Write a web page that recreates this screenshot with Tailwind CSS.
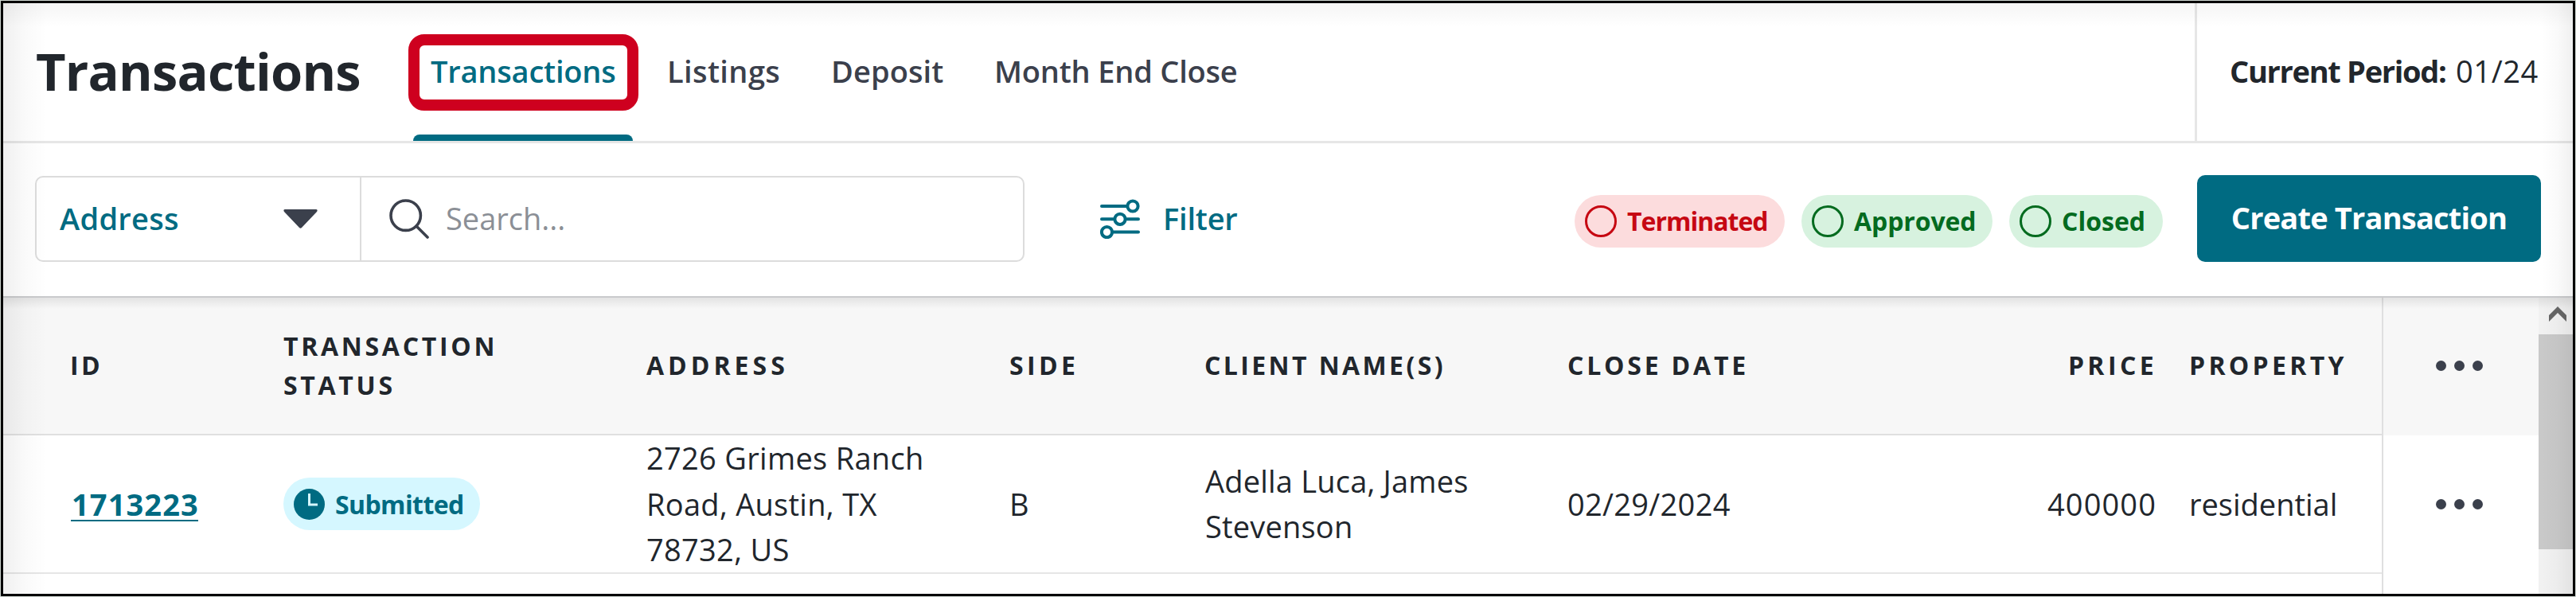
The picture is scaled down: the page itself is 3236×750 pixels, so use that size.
<!doctype html>
<html lang="en">
  <head>
    <meta charset="UTF-8" />
    <meta name="viewport" content="width=device-width, initial-scale=1.0" />
    <title>Transactions</title>
    <!-- Tailwind -->
    <script src="https://cdn.jsdelivr.net/npm/@tailwindcss/browser@4"></script>
  </head>

  <body class="bg-[#cfd6d1]">
    <div
      class="relative m-px flex h-[748px] w-[3234px] flex-col overflow-hidden border-3 border-black bg-white font-['Open_Sans',sans-serif] text-[38px] leading-[57.5px] whitespace-nowrap text-[#21262c]"
    >
      <!-- Page header -->
      <header class="flex h-[176px] shrink-0 border-b-3 border-[#e6e6e6]">
        <h1
          class="flex w-[515px] items-center pb-0.5 pl-[41px] text-[65px] font-bold tracking-[-0.8px]"
        >
          Transactions
        </h1>
        <nav class="flex gap-5 font-semibold text-[#3b404c]">
          <a
            class="relative flex w-[276px] items-center pb-0.5 pl-[22px] tracking-[-0.2px] text-[#006b82]"
          >
            Transactions
            <span
              class="absolute top-[39px] -left-1.5 h-[96px] w-[289px] rounded-[20px] border-14 border-[#ce001f]"
            ></span>
            <span
              class="absolute bottom-0 left-0 h-2 w-full rounded-t-lg bg-[#006b82]"
            ></span>
          </a>
          <a class="flex w-[186px] items-center pb-0.5 pl-[23px] tracking-[0.4px]">Listings</a>
          <a class="flex w-[185px] items-center pb-0.5 pl-[23px] tracking-[0.1px]">Deposit</a>
          <a class="flex items-center pb-0.5 pl-[23px] tracking-[-0.2px]">Month End Close</a>
        </nav>
        <div
          class="ml-auto flex w-[475px] items-center border-l-3 border-[#e6e6e6] pb-0.5 pl-[41px]"
        >
          <span class="w-[284px] font-bold tracking-[-1.3px]">Current Period:</span>
          <span class="tracking-[0.6px]">01/24</span>
        </div>
      </header>

      <!-- Search and filters -->
      <div class="flex h-[192px] shrink-0 items-center pr-10 pb-[3px] pl-10">
        <div class="flex h-[108px] w-[1243px] rounded-[10px] border-2 border-[#dcdcdc]">
          <button
            class="flex w-[408px] items-center justify-between border-r-2 border-[#dcdcdc] pr-[53px] pl-[29px] font-semibold tracking-[0.3px] text-[#006b82]"
          >
            Address
            <svg class="h-[24px] w-[43px]" viewBox="0 0 43 24" fill="#3b404c">
              <path d="M2 0h39c2 0 2 2 1 3L23 23c-1 1-2 1-3 0L1 3C0 2 0 0 2 0z" />
            </svg>
          </button>
          <div class="flex items-center gap-[21px] pl-[35px] text-[#8b8f96]">
            <svg
              class="h-[50px] w-[50px]"
              viewBox="0 0 50 50"
              fill="none"
              stroke="#3b404c"
              stroke-width="3.6"
              stroke-linecap="round"
            >
              <circle cx="20.7" cy="20.7" r="18.7" />
              <path d="M34 34L48 48" />
            </svg>
            Search...
          </div>
        </div>

        <button
          class="ml-[95px] flex items-center gap-[29px] font-semibold tracking-[-0.2px] text-[#006b82]"
        >
          <svg
            class="h-[50px] w-[50px]"
            viewBox="0 0 50 50"
            fill="none"
            stroke="currentColor"
            stroke-width="4"
            stroke-linecap="round"
          >
            <path d="M2 9h32M2 25.3h16M32 25.3h16M16 41.6h32" />
            <circle cx="41" cy="9" r="6.6" />
            <circle cx="25" cy="25.3" r="6.6" />
            <circle cx="8.5" cy="41.6" r="6.6" />
          </svg>
          Filter
        </button>

        <div class="mt-[6px] mr-[43px] ml-auto flex gap-[21px] text-[32px] font-bold">
          <span
            class="flex h-[66px] w-[264px] items-center gap-[13px] rounded-full bg-[#fcdcdd] pl-[13px] tracking-[-1px] text-[#c60812]"
          >
            <span class="size-10 rounded-full border-3 border-current"></span>Terminated
          </span>
          <span
            class="flex h-[66px] w-[240px] items-center gap-[13px] rounded-full bg-[#d7f2df] pl-[13px] tracking-[-0.1px] text-[#046b1f]"
          >
            <span class="size-10 rounded-full border-3 border-current"></span>Approved
          </span>
          <span
            class="flex h-[66px] w-[193px] items-center gap-[13px] rounded-full bg-[#d7f2df] pl-[13px] text-[#046b1f]"
          >
            <span class="size-10 rounded-full border-3 border-current"></span>Closed
          </span>
        </div>

        <button
          class="h-[109px] w-[432px] rounded-[10px] bg-[#006b82] pb-0.5 font-bold tracking-[-0.8px] text-white"
        >
          Create Transaction
        </button>
      </div>

      <!-- Transactions table -->
      <div class="flex grow border-t-2 border-[#c9cacc]">
        <div class="w-[2988px]">
          <div
            class="grid h-[173px] grid-cols-[329px_456px_456px_246px_456px_456px_326px_263px] items-center border-b-2 border-[#e0e0e0] bg-[#f7f7f7] pb-0.5 text-[32px] leading-[49px] font-bold"
          >
            <div class="pl-[84px] tracking-[3.5px]">ID</div>
            <div class="pl-[23px] tracking-[3.7px]">TRANSACTION<br />STATUS</div>
            <div class="pl-[23px] tracking-[5px]">ADDRESS</div>
            <div class="pl-[23px] tracking-[4.4px]">SIDE</div>
            <div class="pl-[22px] tracking-[3.4px]">CLIENT NAME(S)</div>
            <div class="pl-[22px] tracking-[3.8px]">CLOSE DATE</div>
            <div class="pr-[19px] text-right tracking-[4.4px]">PRICE</div>
            <div class="pl-[21px] tracking-[4.3px]">PROPERTY</div>
          </div>
          <div
            class="grid h-[174px] grid-cols-[329px_456px_456px_246px_456px_456px_326px_263px] items-center border-b-2 border-[#e6e6e6]"
          >
            <div class="pl-[85px]">
              <a
                class="inline-block h-[50px] w-[160px] border-b-2 border-[#006b82] pl-px font-bold tracking-[1.1px] text-[#006b82]"
                >1713223</a
              >
            </div>
            <div class="pl-[23px]">
              <span
                class="flex h-[66px] w-[247px] items-center gap-[13px] rounded-full bg-[#d5f7ff] pl-[13px] text-[32px] font-bold tracking-[-0.6px] text-[#006b82]"
              >
                <svg class="h-[39px] w-[39px]" viewBox="0 0 39 39" fill="none">
                  <circle cx="19.5" cy="19.5" r="19.5" fill="#006b82" />
                  <path d="M19.5 6v14H30" stroke="#d5f7ff" stroke-width="3" />
                </svg>
                Submitted
              </span>
            </div>
            <div class="pl-[23px] tracking-[0.3px]">
              2726 Grimes Ranch<br />Road, Austin, TX<br />78732, US
            </div>
            <div class="pl-[23px]">B</div>
            <div class="pl-[23px] tracking-[0.2px]">Adella Luca, James<br />Stevenson</div>
            <div class="pl-[22px] tracking-[0.3px]">02/29/2024</div>
            <div class="pr-[20px] text-right tracking-[1.1px]">400000</div>
            <div class="pl-[21px]">residential</div>
          </div>
        </div>

        <!-- Row actions -->
        <div class="w-[197px] border-l-2 border-[#dfdfe0]">
          <div
            class="flex h-[173px] items-center justify-center gap-[10px] bg-[#f7f7f7] pr-1 pb-0.5"
          >
            <span class="size-[13px] rounded-full bg-[#3b404c]"></span>
            <span class="size-[13px] rounded-full bg-[#3b404c]"></span>
            <span class="size-[13px] rounded-full bg-[#3b404c]"></span>
          </div>
          <div class="flex h-[173px] items-center justify-center gap-[10px] pr-1">
            <span class="size-[13px] rounded-full bg-[#3b404c]"></span>
            <span class="size-[13px] rounded-full bg-[#3b404c]"></span>
            <span class="size-[13px] rounded-full bg-[#3b404c]"></span>
          </div>
        </div>

        <!-- Scrollbar -->
        <div class="flex grow flex-col bg-[#f1f1f1]">
          <div class="flex h-[46px] items-center justify-center pb-1 pl-1">
            <svg class="h-[20px] w-[22px]" viewBox="0 0 22 20" fill="#666">
              <path d="M11 0L22 11v8L11 8 0 19v-8z" />
            </svg>
          </div>
          <div class="h-[270px] bg-[#c9c9c9]"></div>
        </div>
      </div>

      <!-- Shadow under the toolbar and soft edge shading -->
      <div
        class="pointer-events-none absolute top-[370px] left-0 h-[14px] w-full bg-linear-to-b from-black/8 to-transparent"
      ></div>
      <div
        class="pointer-events-none absolute inset-y-0 left-0 w-[56px] bg-linear-to-r from-black/6 via-black/2 to-transparent"
      ></div>
      <div
        class="pointer-events-none absolute inset-y-0 right-0 w-[40px] bg-linear-to-l from-black/6 via-black/2 to-transparent"
      ></div>
      <div
        class="pointer-events-none absolute inset-x-0 top-0 h-[30px] bg-linear-to-b from-black/4 to-transparent"
      ></div>
    </div>
  </body>
</html>
